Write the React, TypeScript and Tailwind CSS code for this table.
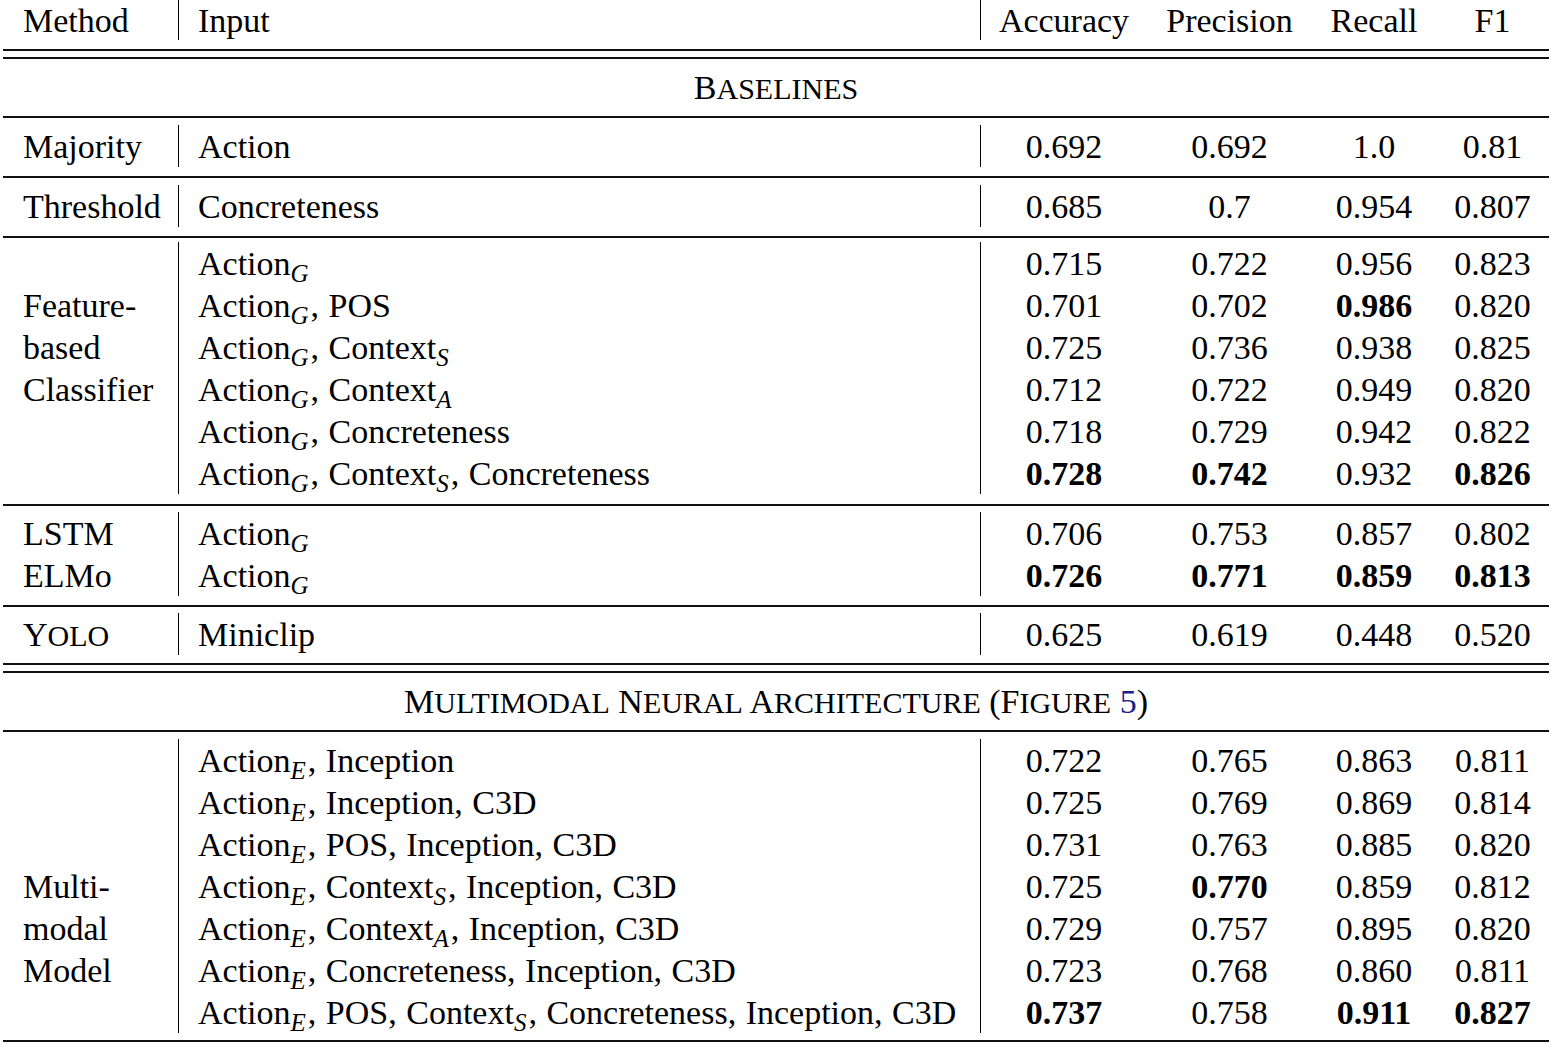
import type { ReactNode } from "react";

type Row = {
  method?: ReactNode;
  input: ReactNode;
  vals: [string, string, string, string];
  bold?: [boolean, boolean, boolean, boolean];
};

/** Math-style italic subscript, like LaTeX's $_G$. */
function Sub({ children }: { children: string }) {
  return <span className="mr-[2px] align-[-7px] text-[25px] italic leading-none">{children}</span>;
}

/** TeX-style small caps: lowercase runs become smaller capitals. */
function SmallCaps({ text }: { text: string }) {
  const parts = text.match(/[a-z]+|[^a-z]+/g) ?? [];
  return (
    <span className="whitespace-pre">
      {parts.map((p, i) =>
        /[a-z]/.test(p) ? (
          <span key={i} className="text-[30px] uppercase">
            {p}
          </span>
        ) : (
          <span key={i}>{p}</span>
        ),
      )}
    </span>
  );
}

const ActG = (
  <>
    Action<Sub>G</Sub>
  </>
);
const ActE = (
  <>
    Action<Sub>E</Sub>
  </>
);
const CtxS = (
  <>
    Context<Sub>S</Sub>
  </>
);
const CtxA = (
  <>
    Context<Sub>A</Sub>
  </>
);

const numWidths = ["w-[167px]", "w-[165px]", "w-[124px]", "w-[113px]"];

function Line() {
  return <div className="h-[2px] bg-[#111]" />;
}

function DoubleLine() {
  return (
    <div className="flex flex-col gap-[6px]">
      <Line />
      <Line />
    </div>
  );
}

function TableRow({ row }: { row: Row }) {
  return (
    <div className="flex h-[42px] items-center">
      <div className="flex h-full w-[175px] items-center whitespace-nowrap pl-[20px]">{row.method}</div>
      <div className="flex h-full w-[802px] items-center whitespace-nowrap border-l border-black pl-[19px] [word-spacing:1px]">
        <span>{row.input}</span>
      </div>
      {row.vals.map((v, i) => (
        <div
          key={i}
          className={`flex h-full items-center justify-center ${numWidths[i]} ${i === 0 ? "border-l border-black" : ""} ${row.bold?.[i] ? "font-bold" : ""}`}
        >
          {v}
        </div>
      ))}
    </div>
  );
}

function Block({ rows, className }: { rows: Row[]; className: string }) {
  return (
    <div className={className}>
      {rows.map((r, i) => (
        <TableRow key={i} row={r} />
      ))}
    </div>
  );
}

function Title({ children }: { children: ReactNode }) {
  return (
    <div className="flex h-[57px] items-center justify-center">
      <span className="whitespace-pre">{children}</span>
    </div>
  );
}

const F = false;
const T = true;

const feature: Row[] = [
  { input: ActG, vals: ["0.715", "0.722", "0.956", "0.823"] },
  { method: "Feature-", input: <>{ActG}, POS</>, vals: ["0.701", "0.702", "0.986", "0.820"], bold: [F, F, T, F] },
  { method: "based", input: <>{ActG}, {CtxS}</>, vals: ["0.725", "0.736", "0.938", "0.825"] },
  { method: "Classifier", input: <>{ActG}, {CtxA}</>, vals: ["0.712", "0.722", "0.949", "0.820"] },
  { input: <>{ActG}, Concreteness</>, vals: ["0.718", "0.729", "0.942", "0.822"] },
  {
    input: <>{ActG}, {CtxS}, Concreteness</>,
    vals: ["0.728", "0.742", "0.932", "0.826"],
    bold: [T, T, F, T],
  },
];

const multimodal: Row[] = [
  { input: <>{ActE}, Inception</>, vals: ["0.722", "0.765", "0.863", "0.811"] },
  { input: <>{ActE}, Inception, C3D</>, vals: ["0.725", "0.769", "0.869", "0.814"] },
  { input: <>{ActE}, POS, Inception, C3D</>, vals: ["0.731", "0.763", "0.885", "0.820"] },
  {
    method: "Multi-",
    input: <>{ActE}, {CtxS}, Inception, C3D</>,
    vals: ["0.725", "0.770", "0.859", "0.812"],
    bold: [F, T, F, F],
  },
  { method: "modal", input: <>{ActE}, {CtxA}, Inception, C3D</>, vals: ["0.729", "0.757", "0.895", "0.820"] },
  { method: "Model", input: <>{ActE}, Concreteness, Inception, C3D</>, vals: ["0.723", "0.768", "0.860", "0.811"] },
  {
    input: <>{ActE}, POS, {CtxS}, Concreteness, Inception, C3D</>,
    vals: ["0.737", "0.758", "0.911", "0.827"],
    bold: [T, F, T, T],
  },
];

export default function App() {
  return (
    <div className="min-h-[1047px] bg-white font-['Liberation_Serif','Times_New_Roman',serif] text-[34px] text-black">
      <div className="ml-[3px] w-[1546px]">
        <Block
          className="pb-[9px] [&>div]:h-[40px]"
          rows={[{ method: "Method", input: "Input", vals: ["Accuracy", "Precision", "Recall", "F1"] }]}
        />
        <DoubleLine />
        <Title>
          <SmallCaps text="Baselines" />
        </Title>
        <Line />
        <Block
          className="pt-[7px] pb-[9px]"
          rows={[{ method: "Majority", input: "Action", vals: ["0.692", "0.692", "1.0", "0.81"] }]}
        />
        <Line />
        <Block
          className="pt-[7px] pb-[9px]"
          rows={[{ method: "Threshold", input: "Concreteness", vals: ["0.685", "0.7", "0.954", "0.807"] }]}
        />
        <Line />
        <Block className="pt-[4px] pb-[10px]" rows={feature} />
        <Line />
        <Block
          className="pt-[6px] pb-[9px]"
          rows={[
            { method: "LSTM", input: ActG, vals: ["0.706", "0.753", "0.857", "0.802"] },
            { method: "ELMo", input: ActG, vals: ["0.726", "0.771", "0.859", "0.813"], bold: [T, T, T, T] },
          ]}
        />
        <Line />
        <Block
          className="pt-[6px] pb-[8px]"
          rows={[
            {
              method: <SmallCaps text="Yolo" />,
              input: "Miniclip",
              vals: ["0.625", "0.619", "0.448", "0.520"],
            },
          ]}
        />
        <DoubleLine />
        <Title>
          <SmallCaps text="Multimodal Neural Architecture (Figure " />
          <span className="text-[#1c1c8c]">5</span>)
        </Title>
        <Line />
        <Block className="pt-[7px] pb-[7px]" rows={multimodal} />
        <Line />
      </div>
    </div>
  );
}
